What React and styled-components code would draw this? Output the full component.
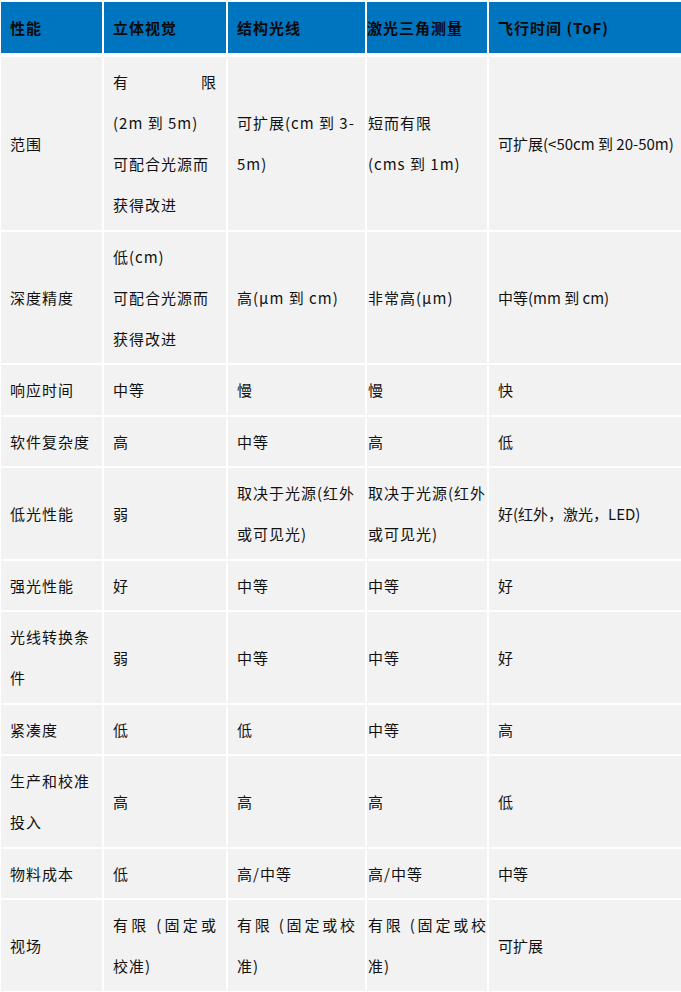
import React from 'react';
import styled, { createGlobalStyle } from 'styled-components';

const GlobalStyle = createGlobalStyle`
    html, body {
        margin: 0;
        padding: 0;
        background: #ffffff;
        overflow: hidden;
    }
    body {
        font-family: "Noto Sans CJK SC", "Liberation Sans", sans-serif;
    }
`;

const Table = styled.table`
    border-collapse: separate;
    border-spacing: 2px;
    table-layout: fixed;
    width: 728px;
    margin: 0 0 0 -1px;
    color: #111111;
    font-size: 15px;
    letter-spacing: 1px;
`;

const HeadCell = styled.th`
    background: #0075bf;
    color: #0a0a0a;
    font-weight: 700;
    text-align: left;
    vertical-align: middle;
    line-height: 41px;
    padding: 5px ${(p) => (p.$tight ? '0' : '9px')};
    border-bottom: 2px solid #ffffff;
    white-space: nowrap;
    overflow: hidden;
`;

const Cell = styled.td`
    background: #f2f2f2;
    text-align: left;
    vertical-align: middle;
    line-height: 41px;
    padding: 4px 9px 4.5px;
    padding-left: ${(p) => (p.$tight ? '1px' : '9px')};
    padding-right: ${(p) => (p.$tight ? '0' : '9px')};
    letter-spacing: ${(p) => (p.$narrow ? '0' : '1px')};
    overflow: hidden;
`;

const Line = styled.div`
    white-space: nowrap;
    text-align: ${(p) => (p.$spread ? 'justify' : 'left')};
    text-align-last: ${(p) => (p.$spread ? 'justify' : 'auto')};
    text-justify: inter-character;
`;

const columns = [101, 122, 137, 120, 240];
const headers = ['性能', '立体视觉', '结构光线', '激光三角测量', '飞行时间 (ToF)'];

// a cell is either a string or a list of lines; '~' in front marks a stretched line
const rows = [
    ['范围', ['~有限', '(2m 到 5m)', '可配合光源而', '获得改进'], ['可扩展(cm 到 3-', '5m)'], ['短而有限', '(cms 到 1m)'], '可扩展(<50cm 到 20-50m)'],
    ['深度精度', ['低(cm)', '可配合光源而', '获得改进'], '高(μm 到 cm)', '非常高(μm)', '中等(mm 到 cm)'],
    ['响应时间', '中等', '慢', '慢', '快'],
    ['软件复杂度', '高', '中等', '高', '低'],
    ['低光性能', '弱', ['取决于光源(红外', '或可见光)'], ['取决于光源(红外', '或可见光)'], '好(红外，激光，LED)'],
    ['强光性能', '好', '中等', '中等', '好'],
    [['光线转换条', '件'], '弱', '中等', '中等', '好'],
    ['紧凑度', '低', '低', '中等', '高'],
    [['生产和校准', '投入'], '高', '高', '高', '低'],
    ['物料成本', '低', '高/中等', '高/中等', '中等'],
    ['视场', ['~有限 (固定或', '校准)'], ['~有限 (固定或校', '准)'], ['~有限 (固定或校', '准)'], '可扩展'],
];

const CellText = ({ value }) => {
    const lines = Array.isArray(value) ? value : [value];
    return lines.map((l, i) => {
        const spread = l.startsWith('~');
        return <Line key={i} $spread={spread}>{spread ? l.slice(1) : l}</Line>;
    });
};

const App = () => {
    return (
        <>
            <GlobalStyle />
            <Table>
                <colgroup>
                    {columns.map((w, i) => <col key={i} style={{ width: w }} />)}
                </colgroup>
                <thead>
                    <tr>
                        {headers.map((h, i) => <HeadCell key={h} $tight={i === 3}>{h}</HeadCell>)}
                    </tr>
                </thead>
                <tbody>
                    {rows.map((row, r) => (
                        <tr key={r}>
                            {row.map((c, i) => (
                                <Cell key={i} $tight={i === 3} $narrow={i === 4}>
                                    <CellText value={c} />
                                </Cell>
                            ))}
                        </tr>
                    ))}
                </tbody>
            </Table>
        </>
    );
}

export default App;
